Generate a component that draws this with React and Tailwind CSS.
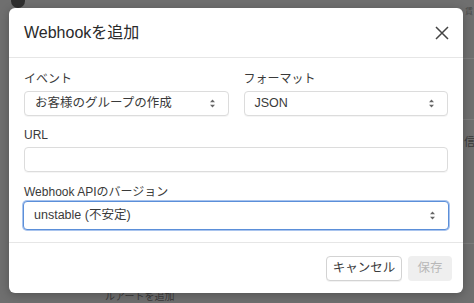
import React from 'react';

const font = { fontFamily: '"Liberation Sans", "Noto Sans CJK JP", sans-serif' };

function Arrows() {
  return (
    <svg width="7" height="11" viewBox="0 0 7 11" className="shrink-0 text-[#666]">
      <path d="M1 4.3 L3.5 1.6 L6 4.3 Z" fill="currentColor" />
      <path d="M1 6.7 L3.5 9.4 L6 6.7 Z" fill="currentColor" />
    </svg>
  );
}

function Select({ value, focused }) {
  return (
    <div
      className={`flex items-center justify-between pl-[10px] pr-[12px] rounded-[4px] bg-white text-[12.5px] text-[#3a3a3a] ${
        focused
          ? 'h-[29px] border border-[#5b8fd9] shadow-[0_0_0_1px_#a9c4ee]'
          : 'h-[25px] border border-[#dcdcdc] shadow-[0_1px_0_rgba(0,0,0,0.04)]'
      }`}
    >
      <span>{value}</span>
      <Arrows />
    </div>
  );
}

export default function App() {
  return (
    <div className="relative w-[474px] h-[303px] overflow-hidden bg-[#6f6f6f]" style={font}>
      {/* page behind the overlay */}
      <div className="absolute left-[11px] top-[-6px] w-[14px] h-[14px] rounded-full bg-[#2e2e2e]" />
      <div className="absolute left-[463px] top-[58px] w-[11px] h-px bg-[#7c7c7c]" />
      <div className="absolute left-[463px] top-[119px] w-[11px] h-px bg-[#7c7c7c]" />
      <div className="absolute left-[463px] top-[243px] w-[11px] h-px bg-[#7c7c7c]" />
      <div className="absolute left-[464px] top-[134px] text-[11px] text-[#3a3a3a]">信</div>
      <div className="absolute left-[465px] top-[6px] text-[8px] text-[#4a4a4a]">賃</div>
      <div className="absolute left-[105px] top-[291px] text-[10px] leading-[12px] text-[#3a3a3a]">ルアートを追加</div>

      {/* modal */}
      <div className="absolute left-[9px] top-[8px] w-[454px] h-[285px] bg-white rounded-[6px] shadow-[0_2px_10px_rgba(0,0,0,0.25)] flex flex-col">
        <div className="h-[50px] flex items-center justify-between pl-[15px] pr-[14px] border-b border-[#e6e6e6]">
          <span className="text-[16px] text-[#2a2a2a] mt-[1px]">Webhookを追加</span>
          <svg width="14" height="14" viewBox="0 0 14 14" className="text-[#444]">
            <path d="M1 1 L13 13 M13 1 L1 13" stroke="currentColor" strokeWidth="1.5" />
          </svg>
        </div>

        <div className="flex-1 flex flex-col px-[15px] pt-[14px] border-b border-[#e6e6e6]">
          <div className="grid grid-cols-2 gap-x-[15px]">
            <div className="flex flex-col gap-[4px]">
              <span className="text-[12px] text-[#3a3a3a] leading-[15px]">イベント</span>
              <Select value="お客様のグループの作成" />
            </div>
            <div className="flex flex-col gap-[4px]">
              <span className="text-[12px] text-[#3a3a3a] leading-[15px]">フォーマット</span>
              <Select value="JSON" />
            </div>
          </div>

          <div className="flex flex-col gap-[4px] mt-[12px]">
            <span className="text-[12px] text-[#3a3a3a] leading-[15px]">URL</span>
            <div className="h-[25px] rounded-[4px] border border-[#dcdcdc] shadow-[0_1px_0_rgba(0,0,0,0.04)]" />
          </div>

          <div className="flex flex-col gap-[2px] mt-[13px] -mx-[1px]">
            <span className="text-[12px] text-[#3a3a3a] leading-[14px] px-[1px]">Webhook APIのバージョン</span>
            <Select value="unstable (不安定)" focused />
          </div>
        </div>

        <div className="h-[50px] flex items-center justify-end gap-[6px] pr-[11px]">
          <button className="w-[76px] h-[25px] rounded-[4px] border border-[#d3d3d3] bg-white text-[12.5px] text-[#3a3a3a] shadow-[0_1px_0_rgba(0,0,0,0.05)]">
            キャンセル
          </button>
          <button className="w-[44px] h-[25px] rounded-[4px] bg-[#efefef] text-[12.5px] text-[#b8b8b8]">
            保存
          </button>
        </div>
      </div>
    </div>
  );
}
